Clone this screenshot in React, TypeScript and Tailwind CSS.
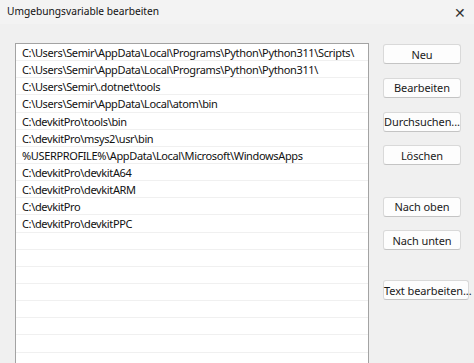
import React from 'react';

const paths: string[] = [
  'C:\\Users\\Semir\\AppData\\Local\\Programs\\Python\\Python311\\Scripts\\',
  'C:\\Users\\Semir\\AppData\\Local\\Programs\\Python\\Python311\\',
  'C:\\Users\\Semir\\.dotnet\\tools',
  'C:\\Users\\Semir\\AppData\\Local\\atom\\bin',
  'C:\\devkitPro\\tools\\bin',
  'C:\\devkitPro\\msys2\\usr\\bin',
  '%USERPROFILE%\\AppData\\Local\\Microsoft\\WindowsApps',
  'C:\\devkitPro\\devkitA64',
  'C:\\devkitPro\\devkitARM',
  'C:\\devkitPro',
  'C:\\devkitPro\\devkitPPC',
  '', '', '', '', '', '', '', '',
];

const Btn = ({ label, wide, className = '' }: { label: string; wide?: boolean; className?: string }) => (
  <button
    className={`${wide ? 'w-[86px]' : 'w-[78px]'} h-[20px] rounded-[3px] border border-[#d9d9d9] border-b-[#c4c4c4] bg-[#fdfdfd] text-[11px] leading-none text-[#1a1a1a] whitespace-nowrap tracking-[-0.1px] ${className}`}
  >
    {label}
  </button>
);

export default function App() {
  return (
    <div className="w-[474px] h-[363px] overflow-hidden bg-[#f0f0f0] font-['Noto_Sans',sans-serif] text-[#111]">
      {/* title bar */}
      <div className="h-[24px] flex items-center justify-between pl-[7px] pr-[8px] bg-[#f3f3f3]">
        <span className="text-[10.2px]">Umgebungsvariable bearbeiten</span>
        <span className="text-[14px] font-light text-[#333]">✕</span>
      </div>

      <div className="flex pl-[15px] pt-[19px]">
        {/* list */}
        <div className="w-[354px] h-[340px] border border-[#a3a3a3] bg-white">
          {paths.map((p, i) => (
            <div
              key={i}
              className="h-[17.15px] border-b border-[#f0f0f0] pl-[6px] pt-[1px] text-[11px] tracking-[-0.36px] leading-[16px] whitespace-nowrap overflow-hidden"
            >
              {p}
            </div>
          ))}
        </div>

        {/* buttons */}
        <div className="flex flex-col pl-[14px] pt-[1px]">
          <Btn label="Neu" />
          <Btn label="Bearbeiten" className="mt-[13.5px]" />
          <Btn label="Durchsuchen..." className="mt-[14px]" />
          <Btn label="Löschen" className="mt-[13.5px]" />
          <Btn label="Nach oben" className="mt-[31.5px]" />
          <Btn label="Nach unten" className="mt-[13.5px]" />
          <Btn label="Text bearbeiten..." wide className="mt-[30px]" />
        </div>
      </div>
    </div>
  );
}
